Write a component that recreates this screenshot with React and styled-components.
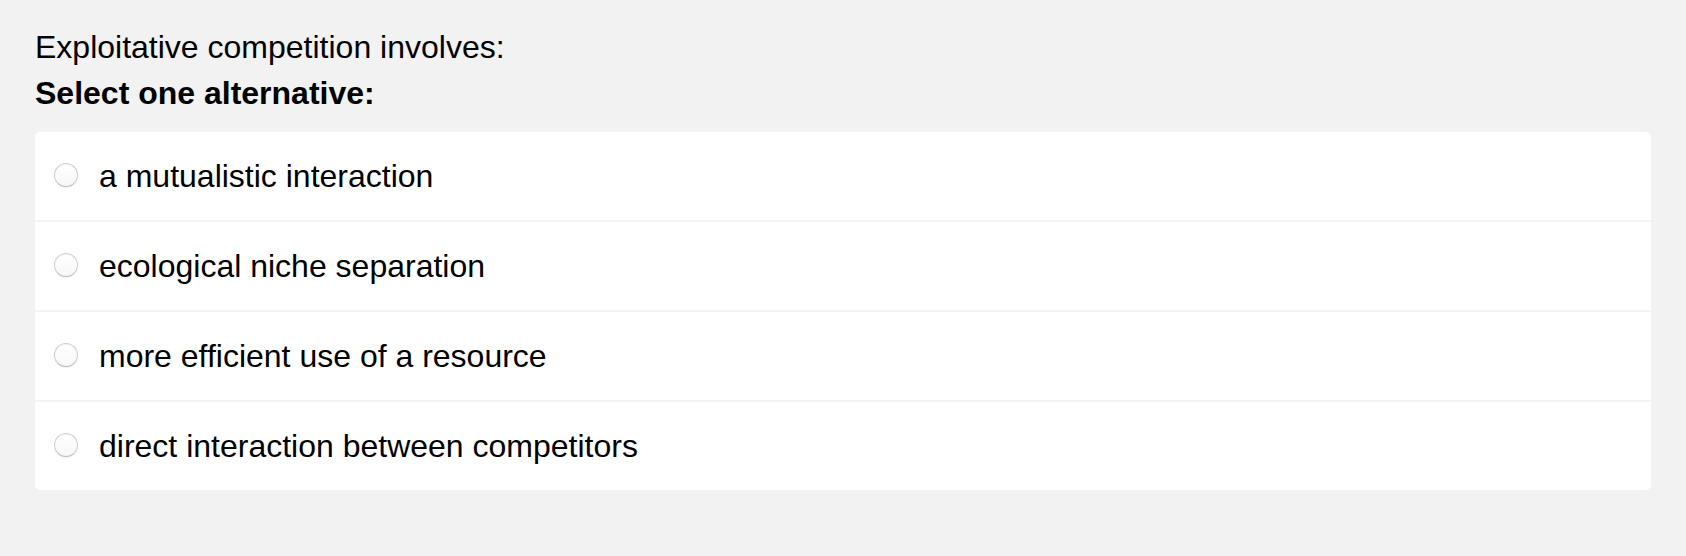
import React from 'react';
import styled, { createGlobalStyle } from 'styled-components';

const GlobalStyle = createGlobalStyle`
    html, body {
        margin: 0;
        padding: 0;
        background: #f2f2f2;
    }
    body {
        font-family: "Liberation Sans", Arial, Helvetica, sans-serif;
        color: #000;
    }
`;

const Page = styled.div`
    padding: 24px 35px 40px 35px;
    box-sizing: border-box;
    width: 100%;
    min-height: 556px;
`;

const Question = styled.div`
    font-size: 32px;
    line-height: 46px;
`;

const Prompt = styled.div`
    font-size: 32px;
    line-height: 46px;
    font-weight: 700;
`;

const OptionList = styled.div`
    margin-top: 16px;
    display: flex;
    flex-direction: column;
    gap: 2px;
    border-radius: 5px;
    overflow: hidden;
`;

const Option = styled.label`
    display: flex;
    align-items: center;
    height: 88px;
    padding-left: 19px;
    background: #fff;
    font-size: 32px;
    cursor: pointer;
`;

const Radio = styled.span`
    width: 24px;
    height: 24px;
    margin-top: -3px;
    border-radius: 50%;
    box-sizing: border-box;
    border: 1px solid #cfcfcf;
    border-bottom-color: #b9b9b9;
    background: linear-gradient(#ffffff, #f7f7f7);
    box-shadow: inset 0 1px 1px rgba(0, 0, 0, 0.05), 0 1px 1px rgba(0, 0, 0, 0.06);
    margin-right: 21px;
    flex-shrink: 0;
`;

const options = [
    'a mutualistic interaction',
    'ecological niche separation',
    'more efficient use of a resource',
    'direct interaction between competitors',
];

function App() {
    return (
        <>
            <GlobalStyle />
            <Page>
                <Question>Exploitative competition involves:</Question>
                <Prompt>Select one alternative:</Prompt>
                <OptionList>
                    {options.map((text) => (
                        <Option key={text}>
                            <Radio />
                            {text}
                        </Option>
                    ))}
                </OptionList>
            </Page>
        </>
    );
}

export default App;
